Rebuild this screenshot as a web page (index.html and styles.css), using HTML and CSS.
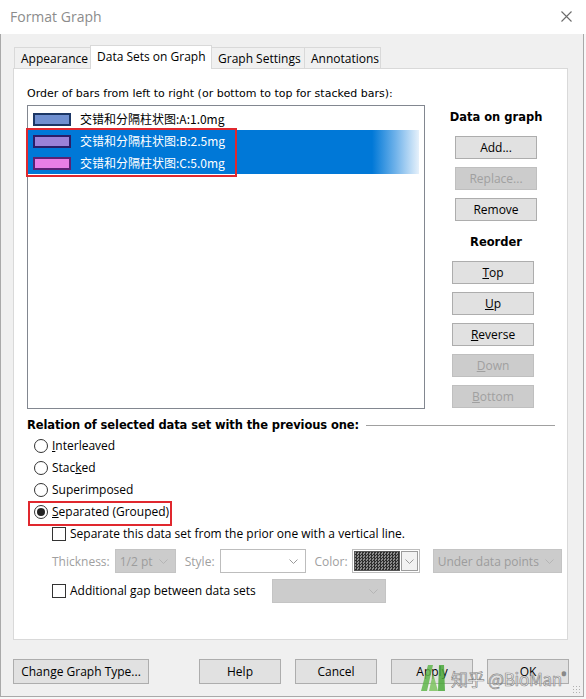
FILE: index.html
```html
<!DOCTYPE html>
<html lang="en">
<head>
    <meta charset="UTF-8">
    <title>Format Graph</title>
    <link rel="stylesheet" href="styles.css">
</head>
<body>
    <div class="window">
        <div class="titlebar">
            <span class="title">Format Graph</span>
            <svg class="close" width="11" height="11" viewBox="0 0 11 11"><path d="M0.5 0.5 L10.5 10.5 M10.5 0.5 L0.5 10.5" stroke="#6b6b6b" stroke-width="1.1" fill="none"/></svg>
        </div>

        <div class="body">
            <div class="tabs">
                <div class="tab tab-first">Appearance</div>
                <div class="tab active">Data Sets on Graph</div>
                <div class="tab">Graph Settings</div>
                <div class="tab">Annotations</div>
            </div>

            <div class="panel">
                <div class="top-row">
                    <div class="list-col">
                        <div class="list-label">Order of bars from left to right (or bottom to top for stacked bars):</div>
                        <div class="listbox">
                            <div class="item">
                                <span class="swatch swatch-a"></span>
                                <span class="item-text">交错和分隔柱状图:A:1.0mg</span>
                            </div>
                            <div class="selected-group">
                                <div class="item">
                                    <span class="swatch swatch-b"></span>
                                    <span class="item-text">交错和分隔柱状图:B:2.5mg</span>
                                </div>
                                <div class="item">
                                    <span class="swatch swatch-c"></span>
                                    <span class="item-text">交错和分隔柱状图:C:5.0mg</span>
                                </div>
                            </div>
                            <div class="mark mark-list"></div>
                        </div>
                    </div>

                    <div class="side-col">
                        <div class="side-title">Data on graph</div>
                        <button class="btn side-btn wide">Add...</button>
                        <button class="btn side-btn wide" disabled>Replace...</button>
                        <button class="btn side-btn wide">Remove</button>
                        <div class="side-title reorder">Reorder</div>
                        <button class="btn side-btn"><u>T</u>op</button>
                        <button class="btn side-btn"><u>U</u>p</button>
                        <button class="btn side-btn"><u>R</u>everse</button>
                        <button class="btn side-btn" disabled><u>D</u>own</button>
                        <button class="btn side-btn last" disabled><u>B</u>ottom</button>
                    </div>
                </div>

                <div class="relation">
                    <div class="group-title">
                        <span>Relation of selected data set with the previous one:</span>
                        <span class="rule"></span>
                    </div>
                    <label class="radio"><span class="dot"></span><u>I</u>nterleaved</label>
                    <label class="radio"><span class="dot"></span>Stac<u>k</u>ed</label>
                    <label class="radio"><span class="dot"></span>Superimposed</label>
                    <label class="radio checked"><span class="dot"></span><u>S</u>eparated (Grouped)<span class="mark mark-radio"></span></label>

                    <label class="check"><span class="box"></span>Separate this data set from the prior one with a vertical line.</label>

                    <div class="line-row">
                        <span class="dim">Thickness:</span>
                        <div class="select disabled w-thick">1/2 pt<svg class="chev" width="9" height="5" viewBox="0 0 9 5"><path d="M0.5 0.5 L4.5 4.5 L8.5 0.5" stroke="#b5b5b5" fill="none"/></svg></div>
                        <span class="dim">Style:</span>
                        <div class="select w-style"><svg class="chev" width="9" height="5" viewBox="0 0 9 5"><path d="M0.5 0.5 L4.5 4.5 L8.5 0.5" stroke="#9a9a9a" fill="none"/></svg></div>
                        <span class="dim">Color:</span>
                        <div class="color-pick">
                            <span class="checker"></span>
                            <span class="color-arrow"><svg width="9" height="5" viewBox="0 0 9 5"><path d="M0.5 0.5 L4.5 4.5 L8.5 0.5" stroke="#9a9a9a" fill="none"/></svg></span>
                        </div>
                        <div class="select disabled w-under">Under data points<svg class="chev" width="9" height="5" viewBox="0 0 9 5"><path d="M0.5 0.5 L4.5 4.5 L8.5 0.5" stroke="#b5b5b5" fill="none"/></svg></div>
                    </div>

                    <div class="gap-row">
                        <label class="check"><span class="box"></span>Additional gap between data sets</label>
                        <div class="select disabled w-gap"><svg class="chev" width="9" height="5" viewBox="0 0 9 5"><path d="M0.5 0.5 L4.5 4.5 L8.5 0.5" stroke="#b5b5b5" fill="none"/></svg></div>
                    </div>
                </div>
            </div>

            <div class="footer">
                <button class="btn foot-btn w-change">Change Graph Type...</button>
                <button class="btn foot-btn w-help">Help</button>
                <button class="btn foot-btn">Cancel</button>
                <button class="btn foot-btn">Apply</button>
                <button class="btn foot-btn">OK</button>
            </div>

            <div class="watermark">
                <svg class="wm-logo" width="30" height="28" viewBox="0 0 30 28">
                    <path d="M2 28 L9 2 L14 2 L8 28 Z" fill="#5fb64a" opacity="0.85"/>
                    <path d="M10 28 L14 10 L19 28 Z" fill="#7cc35f" opacity="0.85"/>
                    <path d="M19 28 L20 2 L25 2 L26 28 Z" fill="#4aa83a" opacity="0.85"/>
                </svg>
                <span class="wm-text">知乎 @BioMan<sup>®</sup></span>
            </div>
            <div class="grip"></div>
        </div>
    </div>
</body>
</html>
```

FILE: styles.css
```css
* {
    box-sizing: border-box;
}
body {
    margin: 0;
    background: #f7f7f7;
    font-family: "Open Sans", "Noto Sans CJK SC", sans-serif;
    font-size: 12px;
    color: #000;
}
.window {
    width: 586px;
    height: 699px;
    display: flex;
    flex-direction: column;
}
.titlebar {
    height: 34px;
    background: #ffffff;
    display: flex;
    align-items: center;
    justify-content: space-between;
    padding: 0 14px 2px 10px;
}
.title {
    font-size: 14px;
    color: #8c8c8c;
}
.body {
    position: relative;
    width: 584px;
    height: 663px;
    background: #f0f0f0;
    border-left: 1px solid #a9a9a9;
    border-right: 1px solid #a9a9a9;
    border-bottom: 1px solid #a9a9a9;
    padding: 11px 0 0 12px;
}

/* tabs */
.tabs {
    display: flex;
    align-items: flex-end;
    height: 23px;
    padding-left: 1px;
}
.tab {
    height: 21px;
    padding: 0 6px;
    border: 1px solid #d9d9d9;
    border-bottom: none;
    border-left: none;
    background: #f0f0f0;
    line-height: 22px;
    white-space: nowrap;
}
.tab-first {
    border-left: 1px solid #d9d9d9;
}
.tab:nth-child(1) { width: 77px; }
.tab:nth-child(3) { width: 93px; }
.tab:nth-child(4) { width: 76px; }
.tab.active {
    width: 122px;
    height: 24px;
    margin-bottom: -1px;
    background: #ffffff;
    border-left: 1px solid #d9d9d9;
    margin-left: -1px;
    position: relative;
    z-index: 1;
    line-height: 22px;
    padding-bottom: 3px;
}

/* panel */
.panel {
    width: 555px;
    height: 572px;
    background: #ffffff;
    border: 1px solid #d9d9d9;
    padding: 0 0 0 13px;
}
.top-row {
    display: flex;
}
.list-col {
    width: 398px;
}
.list-label {
    height: 36px;
    padding-top: 16px;
    line-height: 17px;
    font-family: "DejaVu Sans", "Noto Sans CJK SC", sans-serif;
    font-size: 11px;
    white-space: nowrap;
}
.listbox {
    position: relative;
    height: 304px;
    border: 1px solid #828790;
    padding-top: 2px;
}
.item {
    height: 22px;
    display: flex;
    align-items: center;
    padding-left: 5px;
}
.selected-group {
    width: 391px;
    background: linear-gradient(to right, #0078d7 0, #0078d7 88%, #6fb2ea 94%, #e6f1fb 100%);
    color: #ffffff;
}
.swatch {
    width: 38px;
    height: 13px;
    border: 2px solid #1d3568;
    margin-right: 9px;
}
.swatch-a { background: #6f8fd0; border-color: #1c3766; }
.swatch-b { background: #9b82d8; border-color: #2b1d68; }
.swatch-c { background: #e97ee6; border-color: #5c2173; }
.item-text {
    font-family: "Noto Sans CJK SC", sans-serif;
    font-size: 12px;
    line-height: 16px;
}
.mark {
    position: absolute;
    border: 2px solid #e0282e;
    pointer-events: none;
}
.mark-list {
    left: -2px;
    top: 22px;
    width: 211px;
    height: 49px;
}

/* side buttons */
.side-col {
    width: 136px;
    display: flex;
    flex-direction: column;
    align-items: center;
    padding-top: 40px;
}
.side-title {
    font-family: "DejaVu Sans", sans-serif;
    font-weight: bold;
    font-size: 11.5px;
    line-height: 16px;
    margin-bottom: 11px;
    padding-left: 6px;
}
.side-title.reorder {
    margin-top: 5px;
    margin-bottom: 11px;
}
.btn {
    font-family: "Open Sans", sans-serif;
    font-size: 12px;
    color: #000;
    background: #e1e1e1;
    border: 1px solid #adadad;
    padding: 0;
    line-height: 20px;
}
.btn:disabled {
    background: #cccccc;
    border-color: #bfbfbf;
    color: #a0a0a0;
}
.side-btn {
    width: 82px;
    height: 23px;
    margin-bottom: 8px;
}
.side-btn.wide {
    margin-left: 6px;
}
.side-btn.last {
    margin-bottom: 0;
}

/* relation group */
.relation {
    padding-top: 8px;
}
.group-title {
    display: flex;
    align-items: center;
    height: 16px;
    font-family: "DejaVu Sans", sans-serif;
    font-weight: bold;
    font-size: 11.5px;
    letter-spacing: -0.1px;
}
.rule {
    width: 189px;
    height: 1px;
    background: #a0a0a0;
    margin-left: 7px;
}
.radio {
    position: relative;
    display: flex;
    align-items: center;
    width: max-content;
    height: 22px;
    padding-left: 7px;
    line-height: 16px;
}
.radio:first-of-type {
    margin-top: 2px;
}
.dot {
    width: 14px;
    height: 14px;
    border: 1px solid #333;
    border-radius: 50%;
    margin-right: 4px;
    background: #fff;
    display: flex;
    align-items: center;
    justify-content: center;
}
.radio.checked .dot::after {
    content: "";
    width: 8px;
    height: 8px;
    border-radius: 50%;
    background: #222;
}
.mark-radio {
    left: 1px;
    top: 0;
    width: 144px;
    height: 25px;
}
.check {
    display: flex;
    align-items: center;
    height: 21px;
    padding-left: 25px;
    line-height: 16px;
    margin-top: 0;
}
.box {
    width: 14px;
    height: 14px;
    border: 1px solid #333;
    background: #fff;
    margin-right: 4px;
}
.line-row {
    display: flex;
    align-items: center;
    height: 26px;
    margin-top: 4px;
    padding-left: 25px;
}
.dim {
    color: #a0a0a0;
    margin-right: 3px;
}
.select {
    display: flex;
    align-items: center;
    justify-content: space-between;
    height: 24px;
    padding: 0 7px 0 4px;
    border: 1px solid #bdbdbd;
    background: #fff;
    color: #9c9c9c;
    margin-right: 9px;
    white-space: nowrap;
}
.select.disabled {
    background: #cccccc;
    border-color: #c4c4c4;
}
.chev {
    flex: none;
}
.w-thick { width: 61px; margin-left: 2px; }
.w-style { width: 86px; justify-content: flex-end; margin-left: 2px; }
.w-under { width: 129px; margin-left: 13px; margin-right: 0; }
.w-gap { width: 114px; justify-content: flex-end; margin-left: 16px; }
.color-pick {
    display: flex;
    width: 68px;
    height: 24px;
    border: 1px solid #bdbdbd;
    background: #fff;
    padding: 1px;
    margin-left: 1px;
}
.checker {
    width: 46px;
    background: repeating-conic-gradient(#2e2e2e 0 25%, #8c8c8c 0 50%) 0 0 / 3px 3px;
    border: 1px solid #555;
}
.color-arrow {
    flex: 1;
    display: flex;
    align-items: center;
    justify-content: center;
    border: 1px solid #9c9c9c;
    margin-left: 1px;
    background: #f2f2f2;
}
.gap-row {
    display: flex;
    align-items: center;
    height: 24px;
    margin-top: 5px;
}

/* footer */
.footer {
    display: flex;
    align-items: center;
    margin-top: 19px;
    height: 25px;
}
.foot-btn {
    width: 82px;
    height: 25px;
    margin-left: 14px;
}
.w-change {
    width: 136px;
    margin-left: 0;
}
.w-help {
    margin-left: 50px;
}

/* watermark overlay */
.watermark {
    position: absolute;
    left: 418px;
    top: 629px;
    display: flex;
    align-items: flex-end;
    white-space: nowrap;
    pointer-events: none;
}
.wm-logo {
    flex: none;
    margin-right: 2px;
}
.wm-text {
    font-family: "Noto Sans CJK SC", sans-serif;
    font-size: 17px;
    line-height: 24px;
    letter-spacing: -0.3px;
    color: rgba(255, 255, 255, 0.7);
    -webkit-text-stroke: 0.7px rgba(110, 110, 110, 0.8);
}
.wm-text sup {
    font-size: 9px;
    line-height: 0;
}
.grip {
    position: absolute;
    right: 3px;
    bottom: 3px;
    width: 8px;
    height: 8px;
    background: radial-gradient(circle, #b0b0b0 0.8px, transparent 1px) 0 0 / 3px 3px;
}
```
